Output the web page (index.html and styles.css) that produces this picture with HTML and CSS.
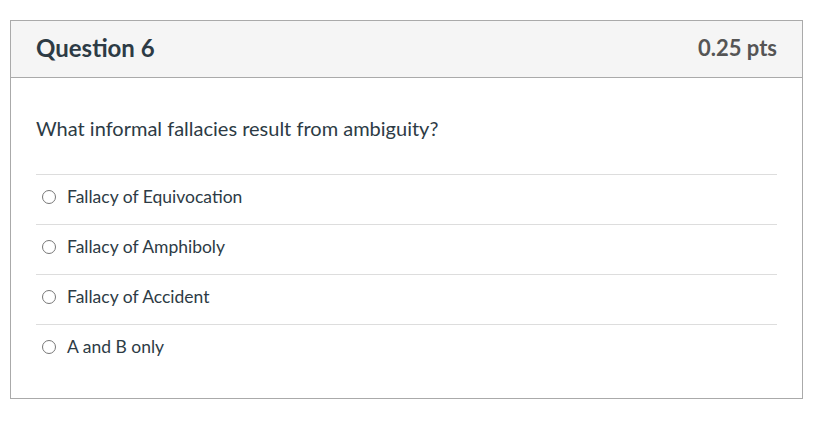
FILE: index.html
```html
<!DOCTYPE html>
<html>
<head>
<meta charset="utf-8">
<link rel="stylesheet" href="styles.css">
</head>
<body>
<div class="card">
  <div class="card-header">
    <h2 class="title">Question 6</h2>
    <span class="pts">0.25 pts</span>
  </div>
  <div class="card-body">
    <p class="question">What informal fallacies result from ambiguity?</p>
    <div class="answers">
      <div class="answer"><span class="radio"></span><span class="label">Fallacy of Equivocation</span></div>
      <div class="answer"><span class="radio"></span><span class="label">Fallacy of Amphiboly</span></div>
      <div class="answer"><span class="radio"></span><span class="label">Fallacy of Accident</span></div>
      <div class="answer"><span class="radio"></span><span class="label">A and B only</span></div>
    </div>
  </div>
</div>
</body>
</html>
```
FILE: styles.css
```css
* { box-sizing: border-box; }
body {
  margin: 0;
  background: #fff;
  font-family: Lato, "Liberation Sans", sans-serif;
  color: #2d3b45;
}
.card {
  margin: 20px 0 0 10px;
  width: 793px;
  border: 1px solid #aaaaaa;
}
.card-header {
  display: flex;
  align-items: center;
  justify-content: space-between;
  height: 57px;
  padding: 0 25px 4px;
  background: #f5f5f5;
  border-bottom: 1px solid #aaaaaa;
}
.title {
  margin: 0;
  font-size: 24px;
  font-weight: 700;
  color: #2d3b45;
}
.pts {
  font-size: 22px;
  font-weight: 700;
  color: #555555;
}
.card-body {
  padding: 37px 25px 24px;
}
.question {
  margin: 0 0 32px;
  font-size: 20px;
  line-height: 27px;
}
.answer {
  display: flex;
  align-items: center;
  border-top: 1px solid #dddddd;
  padding: 10px 0 15px 6px;
  line-height: 24px;
  font-size: 17.5px;
}
.radio {
  width: 14px;
  height: 14px;
  border: 1.5px solid #777777;
  border-radius: 50%;
  margin-right: 11px;
  flex: none;
}
```
